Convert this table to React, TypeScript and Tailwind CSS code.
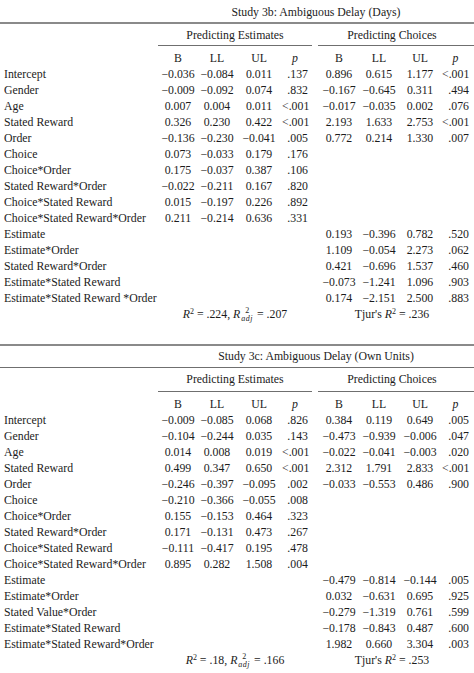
import React from "react";

type Row = string[];

const rows1: Row[] = [
  ["Intercept", "−0.036", "−0.084", "0.011", ".137", "0.896", "0.615", "1.177", "<.001"],
  ["Gender", "−0.009", "−0.092", "0.074", ".832", "−0.167", "−0.645", "0.311", ".494"],
  ["Age", "0.007", "0.004", "0.011", "<.001", "−0.017", "−0.035", "0.002", ".076"],
  ["Stated Reward", "0.326", "0.230", "0.422", "<.001", "2.193", "1.633", "2.753", "<.001"],
  ["Order", "−0.136", "−0.230", "−0.041", ".005", "0.772", "0.214", "1.330", ".007"],
  ["Choice", "0.073", "−0.033", "0.179", ".176", "", "", "", ""],
  ["Choice*Order", "0.175", "−0.037", "0.387", ".106", "", "", "", ""],
  ["Stated Reward*Order", "−0.022", "−0.211", "0.167", ".820", "", "", "", ""],
  ["Choice*Stated Reward", "0.015", "−0.197", "0.226", ".892", "", "", "", ""],
  ["Choice*Stated Reward*Order", "0.211", "−0.214", "0.636", ".331", "", "", "", ""],
  ["Estimate", "", "", "", "", "0.193", "−0.396", "0.782", ".520"],
  ["Estimate*Order", "", "", "", "", "1.109", "−0.054", "2.273", ".062"],
  ["Stated Reward*Order", "", "", "", "", "0.421", "−0.696", "1.537", ".460"],
  ["Estimate*Stated Reward", "", "", "", "", "−0.073", "−1.241", "1.096", ".903"],
  ["Estimate*Stated Reward *Order", "", "", "", "", "0.174", "−2.151", "2.500", ".883"],
];

const rows2: Row[] = [
  ["Intercept", "−0.009", "−0.085", "0.068", ".826", "0.384", "0.119", "0.649", ".005"],
  ["Gender", "−0.104", "−0.244", "0.035", ".143", "−0.473", "−0.939", "−0.006", ".047"],
  ["Age", "0.014", "0.008", "0.019", "<.001", "−0.022", "−0.041", "−0.003", ".020"],
  ["Stated Reward", "0.499", "0.347", "0.650", "<.001", "2.312", "1.791", "2.833", "<.001"],
  ["Order", "−0.246", "−0.397", "−0.095", ".002", "−0.033", "−0.553", "0.486", ".900"],
  ["Choice", "−0.210", "−0.366", "−0.055", ".008", "", "", "", ""],
  ["Choice*Order", "0.155", "−0.153", "0.464", ".323", "", "", "", ""],
  ["Stated Reward*Order", "0.171", "−0.131", "0.473", ".267", "", "", "", ""],
  ["Choice*Stated Reward", "−0.111", "−0.417", "0.195", ".478", "", "", "", ""],
  ["Choice*Stated Reward*Order", "0.895", "0.282", "1.508", ".004", "", "", "", ""],
  ["Estimate", "", "", "", "", "−0.479", "−0.814", "−0.144", ".005"],
  ["Estimate*Order", "", "", "", "", "0.032", "−0.631", "0.695", ".925"],
  ["Stated Value*Order", "", "", "", "", "−0.279", "−1.319", "0.761", ".599"],
  ["Estimate*Stated Reward", "", "", "", "", "−0.178", "−0.843", "0.487", ".600"],
  ["Estimate*Stated Reward*Order", "", "", "", "", "1.982", "0.660", "3.304", ".003"],
];

const GRID =
  "grid grid-cols-[158px_40px_38px_46px_26px_10px_42px_38px_44px_27px_5px] h-[16px] leading-[16px] whitespace-nowrap";

function DataRow({ r }: { r: Row }) {
  return (
    <div className={GRID}>
      <div className="pl-[4px]">{r[0]}</div>
      <div className="text-center">{r[1]}</div>
      <div className="text-center">{r[2]}</div>
      <div className="text-center">{r[3]}</div>
      <div className="text-right">{r[4]}</div>
      <div />
      <div className="text-center">{r[5]}</div>
      <div className="text-center">{r[6]}</div>
      <div className="text-center">{r[7]}</div>
      <div className="text-right">{r[8]}</div>
      <div />
    </div>
  );
}

function HeaderRow({ extra }: { extra: string }) {
  return (
    <div className={`${GRID} ${extra}`}>
      <div />
      <div className="text-center">B</div>
      <div className="text-center">LL</div>
      <div className="text-center">UL</div>
      <div className="text-center italic">p</div>
      <div />
      <div className="text-center">B</div>
      <div className="text-center">LL</div>
      <div className="text-center">UL</div>
      <div className="text-center italic">p</div>
      <div />
    </div>
  );
}

function GroupRow({ h }: { h: string }) {
  return (
    <div className="flex">
      <div className="w-[158px]" />
      <div className={`w-[154px] ${h} border-b border-[#6f6f6f] text-center leading-[22px]`}>
        Predicting Estimates
      </div>
      <div className="w-[6px]" />
      <div className={`w-[156px] ${h} border-b border-[#6f6f6f] text-center leading-[22px] pr-[8px]`}>
        Predicting Choices
      </div>
    </div>
  );
}

function R2({ sub }: { sub?: boolean }) {
  return (
    <>
      <i>R</i>
      {sub ? (
        <span className="inline-flex flex-col text-[8px] leading-[8px] align-middle ml-[1px] mr-[1px]">
          <span>2</span>
          <i className="tracking-[0.5px]">adj</i>
        </span>
      ) : (
        <sup className="text-[8px]">2</sup>
      )}
    </>
  );
}

function R2Row({ a, b, c }: { a: string; b: string; c: string }) {
  return (
    <div className="flex h-[16px] leading-[16px] whitespace-nowrap">
      <div className="w-[158px]" />
      <div className="w-[154px] text-center">
        <R2 /> = {a}, <R2 sub /> = {b}
      </div>
      <div className="w-[6px]" />
      <div className="w-[156px] text-center pr-[8px]">
        Tjur's <R2 /> = {c}
      </div>
    </div>
  );
}

export default function App() {
  return (
    <div
      className="w-[474px] h-[673px] bg-white text-[#1c1c1c] text-[11.8px] overflow-hidden"
      style={{ fontFamily: '"Liberation Serif", "Times New Roman", serif' }}
    >
      {/* Table 1 */}
      <div className="flex h-[22px]">
        <div className="w-[158px]" />
        <div className="flex-1 text-center leading-[20px] pt-[2px]">
          Study 3b: Ambiguous Delay (Days)
        </div>
      </div>
      <div className="h-[2px] bg-[#8a8a8a]" />
      <GroupRow h="h-[22px]" />
      <HeaderRow extra="mt-[4px]" />
      {rows1.map((r, i) => (
        <DataRow key={i} r={r} />
      ))}
      <R2Row a=".224" b=".207" c=".236" />

      {/* Table 2 */}
      <div className="h-[2px] bg-[#8a8a8a] mt-[22px]" />
      <div className="flex h-[22px] border-b border-[#6f6f6f]">
        <div className="w-[158px]" />
        <div className="flex-1 text-center leading-[20px]">
          Study 3c: Ambiguous Delay (Own Units)
        </div>
      </div>
      <GroupRow h="h-[24px]" />
      <HeaderRow extra="mt-[4px] h-[15px]" />
      {rows2.map((r, i) => (
        <DataRow key={i} r={r} />
      ))}
      <R2Row a=".18" b=".166" c=".253" />
    </div>
  );
}
